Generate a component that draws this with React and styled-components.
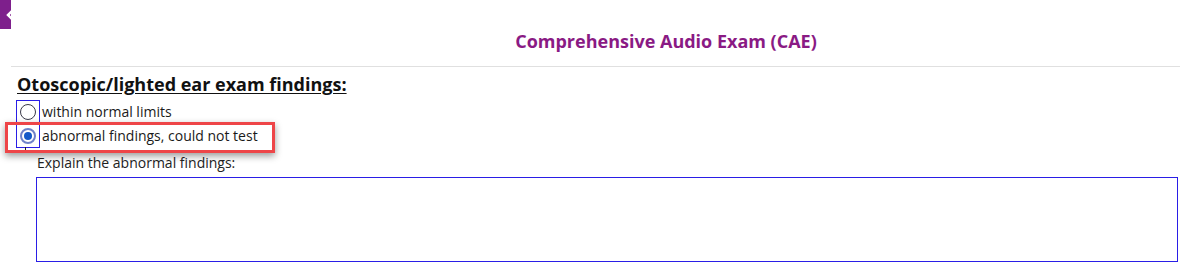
import styled, { createGlobalStyle } from 'styled-components';

const GlobalStyle = createGlobalStyle`
    body {
        margin: 0;
        background: #fff;
        font-family: "Open Sans", "Noto Sans", sans-serif;
        color: #1a1a1a;
    }
`
const Page = styled.div`
    width: 1180px;
    height: 271px;
    overflow: hidden;
`
const Header = styled.div`
    display: flex;
    align-items: flex-start;
`
const BackTab = styled.div`
    width: 11px;
    height: 29px;
    background: #7e1f8c;
    display: flex;
    align-items: center;
    justify-content: flex-end;
    overflow: hidden;
`
const HeaderMain = styled.div`
    flex: 1;
    height: 67px;
    box-sizing: border-box;
    padding: 29px 0 0 141px;
    border-bottom: 1px solid #e0e0e0;
    text-align: center;
`
const Title = styled.h1`
    margin: 0;
    font-size: 18px;
    line-height: 24px;
    font-weight: 700;
    color: #8a1a84;
`
const Content = styled.div`
    padding: 6px 0 0 16px;
`
const Heading = styled.h2`
    margin: 0 0 4px 1px;
    font-size: 18px;
    line-height: 23px;
    font-weight: 700;
    text-decoration: underline;
    text-underline-offset: 2px;
    color: #111;
`
const Option = styled.label`
    position: relative;
    display: flex;
    align-items: center;
    gap: 2px;
    height: ${p => p.$h}px;
    font-size: 14px;
    color: #1a1a1a;
`
const RadioBox = styled.span`
    position: relative;
    width: 22px;
    height: ${p => p.$h - 2}px;
    border: 1px solid #2a1ee6;
    display: flex;
    align-items: center;
    justify-content: center;
    ${p => p.$tick && `
        &::after {
            content: '';
            position: absolute;
            left: 8px;
            bottom: -6px;
            width: 1px;
            height: 6px;
            background: #222;
        }
    `}
`
const Radio = styled.span`
    width: 16px;
    height: 16px;
    box-sizing: border-box;
    border-radius: 50%;
    border: ${p => p.$checked ? '2px solid #6f82c9' : '1px solid #3a3a4a'};
    display: flex;
    align-items: center;
    justify-content: center;
    background: #fff;
    &::after {
        content: '';
        display: ${p => p.$checked ? 'block' : 'none'};
        width: 8px;
        height: 8px;
        border-radius: 50%;
        background: #1459c8;
    }
`
const Highlight = styled.span`
    position: absolute;
    left: -11px;
    top: -1px;
    width: 270px;
    height: 31px;
    box-sizing: border-box;
    border: 3px solid #ee4548;
    box-shadow: 0 3px 7px rgba(0, 0, 0, 0.4);
    pointer-events: none;
`
const Sub = styled.div`
    padding: 5px 0 0 21px;
`
const SubLabel = styled.div`
    font-size: 14px;
    line-height: 19px;
    color: #222;
    margin-bottom: 5px;
`
const TextArea = styled.textarea`
    display: block;
    width: 1142px;
    height: 85px;
    box-sizing: border-box;
    margin: 0 0 0 -1px;
    border: 1px solid #2a1ee6;
    border-radius: 0;
    resize: none;
    font-family: inherit;
    outline: none;
`

const App = () => {
    return (
        <Page>
            <GlobalStyle />
            <Header>
                <BackTab>
                    <svg width="8" height="14" viewBox="0 0 8 14" style={{ marginRight: '-3px' }}>
                        <path d="M7 2 L2 7 L7 12" stroke="#fff" strokeWidth="2.5" fill="none" />
                    </svg>
                </BackTab>
                <HeaderMain>
                    <Title>Comprehensive Audio Exam (CAE)</Title>
                </HeaderMain>
            </Header>
            <Content>
                <Heading>Otoscopic/lighted ear exam findings:</Heading>
                <Option $h={23}>
                    <RadioBox $h={23}><Radio /></RadioBox>
                    within normal limits
                </Option>
                <Option $h={25}>
                    <RadioBox $h={25} $tick><Radio $checked /></RadioBox>
                    abnormal findings, could not test
                    <Highlight />
                </Option>
                <Sub>
                    <SubLabel>Explain the abnormal findings:</SubLabel>
                    <TextArea />
                </Sub>
            </Content>
        </Page>
    )
}

export default App;
